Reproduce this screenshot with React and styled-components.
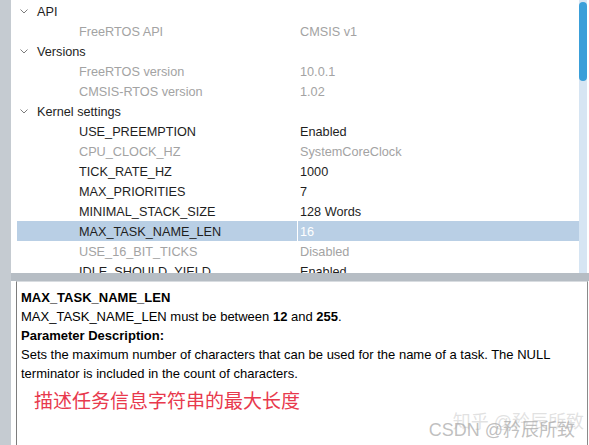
import React from 'react';
import styled, { createGlobalStyle } from 'styled-components';

const GlobalStyle = createGlobalStyle`
  html, body {
    margin: 0;
    padding: 0;
    background: #ffffff;
  }
  body {
    font-family: "Liberation Sans", Arial, sans-serif;
  }
`;

const rows = [
  { kind: 'group', name: 'API' },
  { kind: 'item', name: 'FreeRTOS API', value: 'CMSIS v1', muted: true },
  { kind: 'group', name: 'Versions' },
  { kind: 'item', name: 'FreeRTOS version', value: '10.0.1', muted: true },
  { kind: 'item', name: 'CMSIS-RTOS version', value: '1.02', muted: true },
  { kind: 'group', name: 'Kernel settings' },
  { kind: 'item', name: 'USE_PREEMPTION', value: 'Enabled' },
  { kind: 'item', name: 'CPU_CLOCK_HZ', value: 'SystemCoreClock', muted: true },
  { kind: 'item', name: 'TICK_RATE_HZ', value: '1000' },
  { kind: 'item', name: 'MAX_PRIORITIES', value: '7' },
  { kind: 'item', name: 'MINIMAL_STACK_SIZE', value: '128 Words' },
  { kind: 'item', name: 'MAX_TASK_NAME_LEN', value: '16', selected: true },
  { kind: 'item', name: 'USE_16_BIT_TICKS', value: 'Disabled', muted: true },
  { kind: 'item', name: 'IDLE_SHOULD_YIELD', value: 'Enabled' },
];

const Chevron = () => (
  <svg width="8" height="5" viewBox="0 0 8 5">
    <polyline points="0.5,0.5 4,4 7.5,0.5" fill="none" stroke="#7c7c7c" strokeWidth="1" />
  </svg>
);

const App = () => {
  return (
    <>
      <GlobalStyle />
      <Window>
        <LeftStrip />
        <Main>
          <TreePanel>
            <TreeList>
              {rows.map((row) => (
                <Row key={row.name} $selected={row.selected}>
                  <NameCell $group={row.kind === 'group'} $muted={row.muted}>
                    {row.kind === 'group' && (
                      <ChevronBox>
                        <Chevron />
                      </ChevronBox>
                    )}
                    {row.name}
                  </NameCell>
                  {row.kind === 'item' && (
                    <ValueCell $muted={row.muted} $selected={row.selected}>
                      {row.value}
                    </ValueCell>
                  )}
                </Row>
              ))}
            </TreeList>
            <ScrollTrack>
              <ScrollThumb />
            </ScrollTrack>
          </TreePanel>
          <Splitter />
          <DetailArea>
            <DetailBox>
              <Line><b>MAX_TASK_NAME_LEN</b></Line>
              <Line>
                MAX_TASK_NAME_LEN must be between <b>12</b> and <b>255</b>.
              </Line>
              <Line><b>Parameter Description:</b></Line>
              <Line>
                Sets the maximum number of characters that can be used for the name of a task. The NULL
              </Line>
              <Line>terminator is included in the count of characters.</Line>
              <Note>描述任务信息字符串的最大长度</Note>
              <Watermark>
                <WatermarkBack>知乎 @矜辰所致</WatermarkBack>
                CSDN @矜辰所致
              </Watermark>
            </DetailBox>
          </DetailArea>
        </Main>
      </Window>
    </>
  );
};

const Window = styled.div`
  width: 589px;
  height: 445px;
  display: flex;
  overflow: hidden;
  background: #ffffff;
  font-size: 12.7px;
`;

const LeftStrip = styled.div`
  width: 11px;
  flex: none;
  background: #c5cbd1;
`;

const Main = styled.div`
  flex: 1;
  display: flex;
  flex-direction: column;
  min-width: 0;
`;

const TreePanel = styled.div`
  height: 273px;
  flex: none;
  display: flex;
  overflow: hidden;
`;

const TreeList = styled.div`
  flex: 1;
  padding: 1px 0 0 6px;
`;

const Row = styled.div`
  height: 20px;
  display: flex;
  align-items: center;
  padding-top: 1px;
  box-sizing: border-box;
  background: ${(p) => (p.$selected ? '#b9cfe5' : 'transparent')};
`;

const NameCell = styled.div`
  width: 280px;
  flex: none;
  display: flex;
  align-items: center;
  padding-left: ${(p) => (p.$group ? '3px' : '62px')};
  box-sizing: border-box;
  color: ${(p) => (p.$muted ? '#a3a3a3' : '#1e1e1e')};
  white-space: nowrap;
`;

const ChevronBox = styled.span`
  width: 17px;
  display: inline-flex;
  align-items: center;
`;

const ValueCell = styled.div`
  flex: 1;
  align-self: stretch;
  display: flex;
  align-items: center;
  margin-top: -1px;
  padding: 1px 0 0 2px;
  border-left: 1px solid ${(p) => (p.$selected ? '#ffffff' : 'transparent')};
  color: ${(p) => (p.$selected ? '#ffffff' : p.$muted ? '#a3a3a3' : '#1e1e1e')};
`;

const ScrollTrack = styled.div`
  width: 8px;
  flex: none;
  margin-right: 2px;
  background: #d6e5f3;
  padding-top: 2px;
`;

const ScrollThumb = styled.div`
  height: 79px;
  border-radius: 4px;
  background: #3a9fd9;
`;

const Splitter = styled.div`
  height: 8px;
  flex: none;
  background: #b6bdc4;
`;

const DetailArea = styled.div`
  flex: 1;
  display: flex;
  padding-left: 5px;
  padding-right: 1px;
`;

const DetailBox = styled.div`
  position: relative;
  flex: 1;
  border-left: 1px solid #7d7d7d;
  border-right: 1px solid #8a8a8a;
  border-top: 1px solid #d8dce0;
  padding: 6px 0 0 4px;
  color: #000000;
  font-size: 13px;
`;

const Line = styled.div`
  height: 19px;
  line-height: 19px;
  white-space: nowrap;
`;

const Note = styled.div`
  margin: 5px 0 0 13px;
  font-family: "Noto Sans CJK SC", sans-serif;
  font-size: 19px;
  line-height: 24px;
  color: #e8394d;
`;

const Watermark = styled.div`
  position: absolute;
  right: 12px;
  bottom: 4px;
  font-family: "Liberation Sans", "Noto Sans CJK SC", sans-serif;
  font-size: 18px;
  color: rgba(150, 150, 150, 0.6);
`;

const WatermarkBack = styled.span`
  position: absolute;
  left: 24px;
  top: -8px;
  color: rgba(170, 170, 170, 0.35);
  white-space: nowrap;
`;

export default App;
